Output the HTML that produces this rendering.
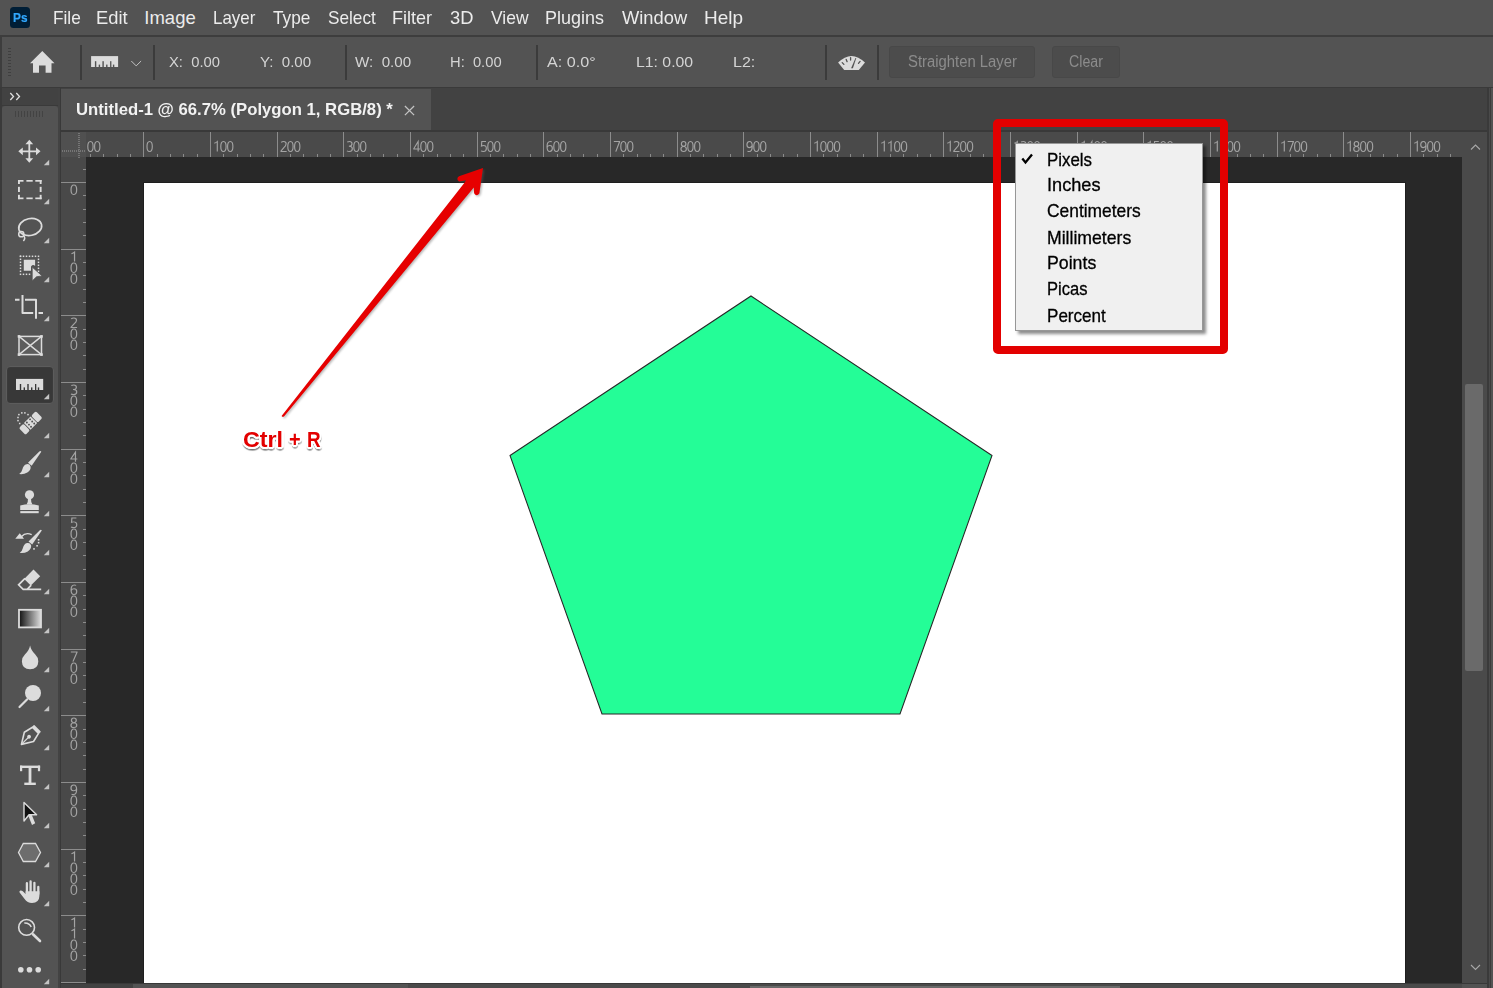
<!DOCTYPE html><html><head><meta charset="utf-8"><style>
*{margin:0;padding:0;box-sizing:border-box}
html,body{width:1493px;height:988px;overflow:hidden;background:#535353;font-family:"Liberation Sans",sans-serif}
.a{position:absolute}
.t{position:absolute;white-space:nowrap;line-height:1}
</style></head><body><div class="a" style="left:0;top:0;width:1493px;height:35px;background:#535353"></div>
<div class="a" style="left:0;top:35px;width:1493px;height:2px;background:#3d3d3d"></div>
<div class="a" style="left:9.7px;top:7.4px;width:20.8px;height:20.4px;background:#001e36;border-radius:3.5px"></div>
<div class="t" style="left:13.02px;top:11.23px;font-size:13.2px;color:#31a8ff;font-weight:bold;transform:scaleX(0.8953);transform-origin:0 0;-webkit-text-stroke:0.2px #31a8ff;">Ps</div>
<div class="t" style="left:52.59px;top:9.34px;font-size:18.5px;color:#ececec;font-weight:normal;transform:scaleX(0.9318);transform-origin:0 0;">File</div>
<div class="t" style="left:96.29px;top:9.34px;font-size:18.5px;color:#ececec;font-weight:normal;transform:scaleX(0.9924);transform-origin:0 0;">Edit</div>
<div class="t" style="left:144.30px;top:9.34px;font-size:18.5px;color:#ececec;font-weight:normal;">Image</div>
<div class="t" style="left:212.91px;top:9.34px;font-size:18.5px;color:#ececec;font-weight:normal;transform:scaleX(0.9155);transform-origin:0 0;">Layer</div>
<div class="t" style="left:273.42px;top:9.34px;font-size:18.5px;color:#ececec;font-weight:normal;transform:scaleX(0.9309);transform-origin:0 0;">Type</div>
<div class="t" style="left:328.23px;top:9.34px;font-size:18.5px;color:#ececec;font-weight:normal;transform:scaleX(0.9296);transform-origin:0 0;">Select</div>
<div class="t" style="left:392.42px;top:9.34px;font-size:18.5px;color:#ececec;font-weight:normal;transform:scaleX(0.9747);transform-origin:0 0;">Filter</div>
<div class="t" style="left:449.80px;top:9.34px;font-size:18.5px;color:#ececec;font-weight:normal;transform:scaleX(0.9923);transform-origin:0 0;">3D</div>
<div class="t" style="left:491.13px;top:9.34px;font-size:18.5px;color:#ececec;font-weight:normal;transform:scaleX(0.9437);transform-origin:0 0;">View</div>
<div class="t" style="left:545.43px;top:9.34px;font-size:18.5px;color:#ececec;font-weight:normal;transform:scaleX(0.9710);transform-origin:0 0;">Plugins</div>
<div class="t" style="left:621.63px;top:9.34px;font-size:18.5px;color:#ececec;font-weight:normal;transform:scaleX(0.9899);transform-origin:0 0;">Window</div>
<div class="t" style="left:703.94px;top:9.34px;font-size:18.5px;color:#ececec;font-weight:normal;transform:scaleX(1.0257);transform-origin:0 0;">Help</div>
<div class="a" style="left:0;top:37px;width:1493px;height:50px;background:#535353"></div>
<div class="a" style="left:0;top:37px;width:2px;height:50px;background:#3d3d3d"></div>
<div class="a" style="left:0;top:86.5px;width:1493px;height:1.5px;background:#3a3a3a"></div>
<div class="a" style="left:8px;top:48px;width:3px;height:1px;background:#3f3f3f"></div>
<div class="a" style="left:8px;top:51px;width:3px;height:1px;background:#3f3f3f"></div>
<div class="a" style="left:8px;top:54px;width:3px;height:1px;background:#3f3f3f"></div>
<div class="a" style="left:8px;top:57px;width:3px;height:1px;background:#3f3f3f"></div>
<div class="a" style="left:8px;top:60px;width:3px;height:1px;background:#3f3f3f"></div>
<div class="a" style="left:8px;top:63px;width:3px;height:1px;background:#3f3f3f"></div>
<div class="a" style="left:8px;top:66px;width:3px;height:1px;background:#3f3f3f"></div>
<div class="a" style="left:8px;top:69px;width:3px;height:1px;background:#3f3f3f"></div>
<div class="a" style="left:8px;top:72px;width:3px;height:1px;background:#3f3f3f"></div>
<div class="a" style="left:8px;top:75px;width:3px;height:1px;background:#3f3f3f"></div>
<svg class="a" style="left:0;top:37px" width="80" height="50"><path d="M42.3 14 L54.5 26.3 L51.5 26.3 L51.5 35.8 L45.6 35.8 L45.6 28.5 L39 28.5 L39 35.8 L33 35.8 L33 26.3 L30 26.3 Z" fill="#dcdcdc"/></svg>
<div class="a" style="left:80px;top:45px;width:2px;height:35px;background:#3b3b3b"></div>
<div class="a" style="left:153px;top:45px;width:2px;height:35px;background:#3b3b3b"></div>
<div class="a" style="left:344.5px;top:45px;width:2px;height:35px;background:#3b3b3b"></div>
<div class="a" style="left:536px;top:45px;width:2px;height:35px;background:#3b3b3b"></div>
<div class="a" style="left:824.5px;top:45px;width:2px;height:35px;background:#3b3b3b"></div>
<div class="a" style="left:876.5px;top:45px;width:2px;height:35px;background:#3b3b3b"></div>
<svg class="a" style="left:0;top:0" width="160" height="88"><rect x="91.1" y="56.1" width="27" height="10.9" fill="#dcdcdc"/><rect x="94.89999999999999" y="61.2" width="1.4" height="5.9" fill="#535353"/><rect x="98.69999999999999" y="64.6" width="1.4" height="2.5" fill="#535353"/><rect x="102.39999999999999" y="61.2" width="1.4" height="5.9" fill="#535353"/><rect x="106.1" y="64.6" width="1.4" height="2.5" fill="#535353"/><rect x="110.1" y="61.2" width="1.3" height="5.9" fill="#535353"/><rect x="112.89999999999999" y="64.6" width="1.4" height="2.5" fill="#535353"/><path d="M131.3 61 L136.2 65.9 L141.1 61" stroke="#cfcfcf" stroke-width="0.9" fill="none"/></svg>
<div class="t" style="left:169.47px;top:54.28px;font-size:15.5px;color:#d4d4d4;font-weight:normal;transform:scaleX(0.9543);transform-origin:0 0;">X:  0.00</div>
<div class="t" style="left:259.77px;top:54.28px;font-size:15.5px;color:#d4d4d4;font-weight:normal;transform:scaleX(0.9723);transform-origin:0 0;">Y:  0.00</div>
<div class="t" style="left:354.84px;top:54.28px;font-size:15.5px;color:#d4d4d4;font-weight:normal;transform:scaleX(0.9775);transform-origin:0 0;">W:  0.00</div>
<div class="t" style="left:450.19px;top:54.28px;font-size:15.5px;color:#d4d4d4;font-weight:normal;transform:scaleX(0.9500);transform-origin:0 0;">H:  0.00</div>
<div class="t" style="left:547.07px;top:54.28px;font-size:15.5px;color:#d4d4d4;font-weight:normal;transform:scaleX(1.0407);transform-origin:0 0;">A: 0.0°</div>
<div class="t" style="left:636.20px;top:54.28px;font-size:15.5px;color:#d4d4d4;font-weight:normal;transform:scaleX(1.0193);transform-origin:0 0;">L1: 0.00</div>
<div class="t" style="left:733.19px;top:54.28px;font-size:15.5px;color:#d4d4d4;font-weight:normal;transform:scaleX(1.0337);transform-origin:0 0;">L2:</div>
<svg class="a" style="left:820px;top:40px" width="60" height="40"><g transform="translate(-820 -40)"><path d="M838.1 62.6 Q851.5 49.2 865 62.6 L858.8 69.9 H844.2 Z" fill="#dcdcdc"/><path d="M842.2 62.6 L843.9 64.4 M846.2 59.4 L847.1 61.7 M850.6 57.6 V60.1 M860.1 61.4 L858.5 63.3" stroke="#535353" stroke-width="1.3" stroke-linecap="round"/><path d="M851.1 68.2 L852.9 68.2 L856.3 58 L855.5 57.9 Z" fill="#535353"/></g></svg>
<div class="a" style="left:889px;top:46px;width:146px;height:32px;background:#4c4c4c;border:1px solid #484848;border-radius:3px"></div>
<div class="t" style="left:907.63px;top:54.33px;font-size:15.8px;color:#8c8c8c;font-weight:normal;transform:scaleX(0.9393);transform-origin:0 0;">Straighten Layer</div>
<div class="a" style="left:1052px;top:46px;width:68px;height:32px;background:#4c4c4c;border:1px solid #484848;border-radius:3px"></div>
<div class="t" style="left:1069.29px;top:54.33px;font-size:15.8px;color:#8c8c8c;font-weight:normal;transform:scaleX(0.8987);transform-origin:0 0;">Clear</div>
<div class="a" style="left:0;top:88px;width:61px;height:900px;background:#434343"></div>
<div class="a" style="left:0;top:88px;width:2px;height:900px;background:#3a3a3a"></div>
<div class="a" style="left:2px;top:88px;width:55.5px;height:17px;background:#424242"></div>
<svg class="a" style="left:0;top:88px" width="40" height="18"><path d="M10.3 5 L13.5 8.5 L10.3 12 M16.3 5 L19.5 8.5 L16.3 12" stroke="#e0e0e0" stroke-width="1.3" fill="none"/></svg>
<div class="a" style="left:2px;top:104.8px;width:55.5px;height:1.2px;background:#3a3a3a"></div>
<div class="a" style="left:2px;top:106px;width:55.5px;height:882px;background:#535353;border-radius:3px 3px 0 0"></div>
<div class="a" style="left:57.5px;top:88px;width:3.5px;height:900px;background:#434343"></div>
<div class="a" style="left:60px;top:88px;width:1px;height:900px;background:#393939"></div>
<div class="a" style="left:15px;top:111px;width:1px;height:5.5px;background:#434343"></div>
<div class="a" style="left:18px;top:111px;width:1px;height:5.5px;background:#434343"></div>
<div class="a" style="left:21px;top:111px;width:1px;height:5.5px;background:#434343"></div>
<div class="a" style="left:24px;top:111px;width:1px;height:5.5px;background:#434343"></div>
<div class="a" style="left:27px;top:111px;width:1px;height:5.5px;background:#434343"></div>
<div class="a" style="left:30px;top:111px;width:1px;height:5.5px;background:#434343"></div>
<div class="a" style="left:33px;top:111px;width:1px;height:5.5px;background:#434343"></div>
<div class="a" style="left:36px;top:111px;width:1px;height:5.5px;background:#434343"></div>
<div class="a" style="left:39px;top:111px;width:1px;height:5.5px;background:#434343"></div>
<div class="a" style="left:42px;top:111px;width:1px;height:5.5px;background:#434343"></div>
<div class="a" style="left:6px;top:365.8px;width:48px;height:37.8px;background:#383838;border:1px solid #5c5c5c;border-radius:4px;box-shadow:inset 0 0 0 0.6px #3e3e3e"></div>
<svg class="a" style="left:0;top:0" width="61" height="988"><path d="M29.3 141.8 V160.8 M20.5 151.3 H38.5" stroke="#dcdcdc" stroke-width="1.8"/><path d="M29.3 139.8 L33.2 144.3 L25.4 144.3 Z M29.3 162.8 L33.2 158.3 L25.4 158.3 Z M18.3 151.3 L22.8 147.4 L22.8 155.20000000000002 Z M40.5 151.3 L36 147.4 L36 155.20000000000002 Z" fill="#dcdcdc"/><rect x="18" y="180" width="5.5" height="1.7" fill="#dcdcdc"/><rect x="18" y="180" width="1.9" height="4" fill="#dcdcdc"/><rect x="26.4" y="180" width="6.3" height="1.7" fill="#dcdcdc"/><rect x="35.3" y="180" width="6.3" height="1.7" fill="#dcdcdc"/><rect x="39.7" y="180" width="1.9" height="4" fill="#dcdcdc"/><rect x="18" y="186.8" width="1.9" height="5.2" fill="#dcdcdc"/><rect x="39.7" y="186.8" width="1.9" height="5.2" fill="#dcdcdc"/><rect x="18" y="194.8" width="1.9" height="4.4" fill="#dcdcdc"/><rect x="18" y="197.5" width="5.5" height="1.7" fill="#dcdcdc"/><rect x="26.4" y="197.5" width="6.3" height="1.7" fill="#dcdcdc"/><rect x="39.7" y="194.8" width="1.9" height="4.4" fill="#dcdcdc"/><rect x="35.3" y="197.5" width="6.3" height="1.7" fill="#dcdcdc"/><ellipse cx="30.2" cy="227" rx="11.6" ry="8.4" transform="rotate(-12 30.2 227)" fill="none" stroke="#dcdcdc" stroke-width="1.7"/><circle cx="21.3" cy="234.2" r="2.6" fill="none" stroke="#dcdcdc" stroke-width="1.5"/><path d="M23.5 235.5 Q26 238 23.4 241" fill="none" stroke="#dcdcdc" stroke-width="1.5"/><rect x="19.75" y="255.55" width="1.5" height="1.5" fill="#dcdcdc"/><rect x="19.75" y="255.55" width="1.5" height="1.5" fill="#dcdcdc"/><rect x="22.75" y="255.55" width="1.5" height="1.5" fill="#dcdcdc"/><rect x="19.75" y="258.55" width="1.5" height="1.5" fill="#dcdcdc"/><rect x="25.75" y="255.55" width="1.5" height="1.5" fill="#dcdcdc"/><rect x="19.75" y="261.55" width="1.5" height="1.5" fill="#dcdcdc"/><rect x="28.75" y="255.55" width="1.5" height="1.5" fill="#dcdcdc"/><rect x="19.75" y="264.55" width="1.5" height="1.5" fill="#dcdcdc"/><rect x="31.75" y="255.55" width="1.5" height="1.5" fill="#dcdcdc"/><rect x="19.75" y="267.55" width="1.5" height="1.5" fill="#dcdcdc"/><rect x="34.75" y="255.55" width="1.5" height="1.5" fill="#dcdcdc"/><rect x="19.75" y="270.55" width="1.5" height="1.5" fill="#dcdcdc"/><rect x="37.75" y="255.55" width="1.5" height="1.5" fill="#dcdcdc"/><rect x="19.75" y="273.55" width="1.5" height="1.5" fill="#dcdcdc"/><rect x="37.75" y="258.55" width="1.5" height="1.5" fill="#dcdcdc"/><rect x="37.75" y="261.55" width="1.5" height="1.5" fill="#dcdcdc"/><rect x="37.75" y="264.55" width="1.5" height="1.5" fill="#dcdcdc"/><rect x="37.75" y="267.55" width="1.5" height="1.5" fill="#dcdcdc"/><rect x="37.75" y="270.55" width="1.5" height="1.5" fill="#dcdcdc"/><rect x="22.75" y="273.55" width="1.5" height="1.5" fill="#dcdcdc"/><rect x="25.75" y="273.55" width="1.5" height="1.5" fill="#dcdcdc"/><rect x="28.75" y="273.55" width="1.5" height="1.5" fill="#dcdcdc"/><path d="M23.8 259.8 H35.1 V266 Q33 264 31 266.5 V270.8 H23.8 Z" fill="#dcdcdc"/><path d="M32.2 267.1 L42.1 275.9 L36.5 276.8 L32.2 281 Z" fill="#dcdcdc" stroke="#535353" stroke-width="0.8" stroke-linejoin="round"/><path d="M15 299.8 H19.5 M22.5 295 V313 H33.2 M25 299.8 H36 V318.8 M38.5 313 H43" fill="none" stroke="#dcdcdc" stroke-width="2" stroke-linejoin="round"/><rect x="19" y="336.4" width="22.5" height="18.2" fill="#5d5d5d" stroke="#dcdcdc" stroke-width="1.5"/><path d="M19 336.4 L41.5 354.6 M41.5 336.4 L19 354.6" stroke="#dcdcdc" stroke-width="1.4"/><rect x="17.7" y="335.09999999999997" width="2.6" height="2.6" fill="#dcdcdc"/><rect x="17.7" y="353.3" width="2.6" height="2.6" fill="#dcdcdc"/><rect x="40.2" y="335.09999999999997" width="2.6" height="2.6" fill="#dcdcdc"/><rect x="40.2" y="353.3" width="2.6" height="2.6" fill="#dcdcdc"/><rect x="16" y="378.9" width="27.2" height="11.1" fill="#dcdcdc"/><rect x="19.8" y="384.0" width="1.4" height="6.1" fill="#383838"/><rect x="23.6" y="387.4" width="1.4" height="2.6999999999999993" fill="#383838"/><rect x="27.3" y="384.0" width="1.4" height="6.1" fill="#383838"/><rect x="31" y="387.4" width="1.4" height="2.6999999999999993" fill="#383838"/><rect x="35" y="384.0" width="1.3" height="6.1" fill="#383838"/><rect x="37.8" y="387.4" width="1.4" height="2.6999999999999993" fill="#383838"/><g transform="translate(22.2 431.45) rotate(-45)"><rect x="0" y="-4.7" width="6.3" height="9.4" rx="1.6" fill="#dcdcdc"/><rect x="17.3" y="-4.7" width="6.6" height="9.4" rx="1.6" fill="#dcdcdc"/><rect x="7.1" y="-4.7" width="9.4" height="9.4" fill="#dcdcdc"/><circle cx="9.6" cy="-3" r="0.95" fill="#535353"/><circle cx="9.6" cy="0" r="0.95" fill="#535353"/><circle cx="9.6" cy="2.9" r="0.95" fill="#535353"/><circle cx="14.1" cy="-3" r="0.95" fill="#535353"/><circle cx="14.1" cy="0" r="0.95" fill="#535353"/><circle cx="14.1" cy="2.9" r="0.95" fill="#535353"/></g><rect x="18.15" y="413.85" width="1.5" height="1.5" fill="#dcdcdc"/><rect x="21.05" y="412.15" width="1.5" height="1.5" fill="#dcdcdc"/><rect x="24.15" y="412.15" width="1.5" height="1.5" fill="#dcdcdc"/><rect x="27.25" y="413.85" width="1.5" height="1.5" fill="#dcdcdc"/><rect x="17.25" y="416.75" width="1.5" height="1.5" fill="#dcdcdc"/><rect x="17.25" y="419.85" width="1.5" height="1.5" fill="#dcdcdc"/><rect x="18.95" y="422.75" width="1.5" height="1.5" fill="#dcdcdc"/><path d="M28 462.7 L39.3 451.4 Q40.6 450.3 41.3 451.8 L31.7 465.8 Z" fill="#dcdcdc"/><path d="M19.2 474 Q21.8 472.3 22.4 469.3 Q23.3 465 26.6 464.2 Q29.6 463.6 30.6 466.4 Q31.2 470 27.3 472.6 Q23.6 474.6 19.2 474 Z" fill="#dcdcdc"/><circle cx="29.5" cy="494.8" r="4.6" fill="#dcdcdc"/><path d="M28 498 Q28.2 502.5 26.5 504.6 H32.5 Q30.8 502.5 31 498 Z" fill="#dcdcdc"/><path d="M20.2 505.5 Q29.5 503 38.8 505.5 V510 H20.2 Z" fill="#dcdcdc"/><rect x="20.3" y="511.1" width="18.4" height="2.1" fill="#dcdcdc"/><g transform="translate(0.5 78.8)"><path d="M28 462.7 L39.3 451.4 Q40.6 450.3 41.3 451.8 L31.7 465.8 Z" fill="#dcdcdc"/><path d="M19.2 474 Q21.8 472.3 22.4 469.3 Q23.3 465 26.6 464.2 Q29.6 463.6 30.6 466.4 Q31.2 470 27.3 472.6 Q23.6 474.6 19.2 474 Z" fill="#dcdcdc"/></g><path d="M15.3 538.8 L19.7 533.2 L24 538.8 Z" fill="#dcdcdc"/><path d="M21.5 536.5 Q25.5 532 31.7 534.6" fill="none" stroke="#dcdcdc" stroke-width="1.4"/><rect x="37.800000000000004" y="539.0" width="1.6" height="1.6" fill="#dcdcdc"/><rect x="37.800000000000004" y="541.9000000000001" width="1.6" height="1.6" fill="#dcdcdc"/><rect x="36.300000000000004" y="545.0" width="1.6" height="1.6" fill="#dcdcdc"/><rect x="33.2" y="548.1" width="1.6" height="1.6" fill="#dcdcdc"/><path d="M33.5 569.6 L40.2 576.3 L30.8 585.6 L24.2 579 Z" fill="#dcdcdc"/><path d="M25 578.3 L18.6 584.8 L23.2 589.3 H41.2 M31.2 585.2 L27.2 589.3" fill="none" stroke="#dcdcdc" stroke-width="1.7"/><defs><linearGradient id="gr" x1="0" x2="1"><stop offset="0" stop-color="#111"/><stop offset="1" stop-color="#ddd"/></linearGradient></defs><rect x="19" y="609.8" width="22" height="17.6" fill="url(#gr)" stroke="#dcdcdc" stroke-width="1.8"/><path d="M30.1 645.6 Q31 650.5 35.3 654.6 Q38.4 657.6 38.3 661.5 Q38 669.3 30.1 669.3 Q22.2 669.3 21.9 661.5 Q21.8 657.6 24.9 654.6 Q29.2 650.5 30.1 645.6 Z" fill="#dcdcdc"/><circle cx="33" cy="693" r="8" fill="#dcdcdc"/><path d="M19.5 707 L27 699.5" stroke="#dcdcdc" stroke-width="2.2" stroke-linecap="round"/><g transform="translate(20.8 745) rotate(-45)"><path d="M0.9 0 L11.5 -6.5 L20.8 -4.3 V4.3 L11.5 6.5 Z" fill="none" stroke="#dcdcdc" stroke-width="1.6" stroke-linejoin="round"/><rect x="20.3" y="-4.9" width="3.4" height="9.8" rx="0.7" fill="#dcdcdc"/><circle cx="11.7" cy="0" r="1.9" fill="#dcdcdc"/><path d="M1.5 0 H11" stroke="#dcdcdc" stroke-width="1.2"/></g><rect x="20" y="765.6" width="20.1" height="2.4" fill="#dcdcdc"/><rect x="20" y="765.6" width="2.2" height="5.6" fill="#dcdcdc"/><rect x="37.9" y="765.6" width="2.2" height="5.6" fill="#dcdcdc"/><rect x="28.6" y="766" width="2.8" height="18" fill="#dcdcdc"/><rect x="24.3" y="782.6" width="11.5" height="2.4" fill="#dcdcdc"/><path d="M28.2 815.6 L31.6 814.6 L35.2 823.3 L32 824.9 Z" fill="#dcdcdc"/><path d="M24 802.4 L36.6 814.7 L29 814.7 L24 821 Z" fill="#111" stroke="#dcdcdc" stroke-width="1.4" stroke-linejoin="round"/><path d="M23.3 843.5 H35.5 L40.5 852.5 L35.5 861.5 H23.3 L18.5 852.5 Z" fill="#6d6d6d" stroke="#dcdcdc" stroke-width="1.3"/><path d="M26.9 883.2 V893 M30.6 881.4 V893 M34.4 882.8 V893 M38.3 887 V894" stroke="#dcdcdc" stroke-width="2.3" stroke-linecap="round"/><path d="M25.6 891.2 H39.4 V896 Q39.2 902.9 32 902.9 Q27.3 902.9 24.6 899 L19.6 892.6 Q18.9 891 20.4 890.5 Q21.6 890.2 22.8 891.3 L25.6 894 Z" fill="#dcdcdc"/><circle cx="26.6" cy="927.4" r="7.9" fill="none" stroke="#dcdcdc" stroke-width="1.6"/><path d="M33 934.3 L40 941" stroke="#dcdcdc" stroke-width="2.6" stroke-linecap="round"/><path d="M24.3 922.9 Q29.5 922.6 31.2 927" stroke="#dcdcdc" stroke-width="1.5" fill="none"/><circle cx="20.8" cy="969.7" r="2.8" fill="#dcdcdc"/><circle cx="29.5" cy="969.7" r="2.8" fill="#dcdcdc"/><circle cx="38.2" cy="969.7" r="2.8" fill="#dcdcdc"/><path d="M49.2 159.8 L49.2 165.2 L43.8 165.2 Z" fill="#c4c4c4"/><path d="M49.2 198.8 L49.2 204.2 L43.8 204.2 Z" fill="#c4c4c4"/><path d="M49.2 237.8 L49.2 243.2 L43.8 243.2 Z" fill="#c4c4c4"/><path d="M49.2 276.8 L49.2 282.2 L43.8 282.2 Z" fill="#c4c4c4"/><path d="M49.2 315.8 L49.2 321.2 L43.8 321.2 Z" fill="#c4c4c4"/><path d="M49.2 393.8 L49.2 399.2 L43.8 399.2 Z" fill="#c4c4c4"/><path d="M49.2 432.8 L49.2 438.2 L43.8 438.2 Z" fill="#c4c4c4"/><path d="M49.2 471.8 L49.2 477.2 L43.8 477.2 Z" fill="#c4c4c4"/><path d="M49.2 510.8 L49.2 516.2 L43.8 516.2 Z" fill="#c4c4c4"/><path d="M49.2 549.8 L49.2 555.2 L43.8 555.2 Z" fill="#c4c4c4"/><path d="M49.2 588.8 L49.2 594.2 L43.8 594.2 Z" fill="#c4c4c4"/><path d="M49.2 627.8 L49.2 633.2 L43.8 633.2 Z" fill="#c4c4c4"/><path d="M49.2 666.8 L49.2 672.2 L43.8 672.2 Z" fill="#c4c4c4"/><path d="M49.2 705.8 L49.2 711.2 L43.8 711.2 Z" fill="#c4c4c4"/><path d="M49.2 744.8 L49.2 750.2 L43.8 750.2 Z" fill="#c4c4c4"/><path d="M49.2 783.8 L49.2 789.2 L43.8 789.2 Z" fill="#c4c4c4"/><path d="M49.2 822.8 L49.2 828.2 L43.8 828.2 Z" fill="#c4c4c4"/><path d="M49.2 861.8 L49.2 867.2 L43.8 867.2 Z" fill="#c4c4c4"/><path d="M49.2 900.8 L49.2 906.2 L43.8 906.2 Z" fill="#c4c4c4"/><path d="M49.2 978.8 L49.2 984.2 L43.8 984.2 Z" fill="#c4c4c4"/></svg>
<div class="a" style="left:61px;top:88px;width:1426px;height:42px;background:#424242"></div>
<div class="a" style="left:61px;top:88.5px;width:370px;height:41.5px;background:#535353"></div>
<div class="t" style="left:76.40px;top:102.29px;font-size:16.9px;color:#f2f2f2;font-weight:bold;transform:scaleX(0.9884);transform-origin:0 0;">Untitled-1 @ 66.7% (Polygon 1, RGB/8) *</div>
<svg class="a" style="left:400px;top:100px" width="20" height="20"><path d="M4.9 6 L14.1 15.1 M14.1 6 L4.9 15.1" stroke="#c4c4c4" stroke-width="1.25"/></svg>
<div class="a" style="left:61px;top:130px;width:1426px;height:2px;background:#393939"></div>
<div class="a" style="left:1487px;top:88px;width:1.5px;height:900px;background:#3a3a3a"></div>
<div class="a" style="left:1488.5px;top:88px;width:1.5px;height:900px;background:#4a4a4a"></div>
<div class="a" style="left:1490px;top:88px;width:1px;height:900px;background:#3c3c3c"></div>
<div class="a" style="left:1491px;top:88px;width:2px;height:900px;background:#535353"></div>
<div class="a" style="left:61px;top:132px;width:1401px;height:25px;background:#4a4a4a"></div>
<div class="a" style="left:61px;top:157px;width:25px;height:826px;background:#494949"></div>
<div class="a" style="left:61px;top:132px;width:25px;height:25px;background:#505050"></div>
<svg class="a" style="left:0;top:0" width="1493" height="988" shape-rendering="crispEdges"><path d="M78 133 h2 M78 135 h2 M78 137 h2 M78 139 h2 M78 141 h2 M78 143 h2 M78 145 h2 M78 147 h2 M78 149 h2 M78 151 h2 M78 153 h2 M78 155 h2 M78 157 h2" stroke="#767676" stroke-width="1"/><path d="M62 150.5 h1 M64 150.5 h1 M66 150.5 h1 M68 150.5 h1 M70 150.5 h1 M72 150.5 h1 M74 150.5 h1 M76 150.5 h1 M78 150.5 h1 M80 150.5 h1 M82 150.5 h1 M84 150.5 h1" stroke="#767676" stroke-width="2"/><path d="M90.5 154 V157 M103.5 154 V157 M117.5 154 V157 M130.5 154 V157 M143.5 132 V157 M157.5 154 V157 M170.5 154 V157 M183.5 154 V157 M197.5 154 V157 M210.5 132 V157 M223.5 154 V157 M237.5 154 V157 M250.5 154 V157 M263.5 154 V157 M277.5 132 V157 M290.5 154 V157 M303.5 154 V157 M317.5 154 V157 M330.5 154 V157 M343.5 132 V157 M357.5 154 V157 M370.5 154 V157 M383.5 154 V157 M397.5 154 V157 M410.5 132 V157 M423.5 154 V157 M437.5 154 V157 M450.5 154 V157 M463.5 154 V157 M477.5 132 V157 M490.5 154 V157 M503.5 154 V157 M517.5 154 V157 M530.5 154 V157 M543.5 132 V157 M557.5 154 V157 M570.5 154 V157 M583.5 154 V157 M597.5 154 V157 M610.5 132 V157 M623.5 154 V157 M637.5 154 V157 M650.5 154 V157 M663.5 154 V157 M677.5 132 V157 M690.5 154 V157 M703.5 154 V157 M717.5 154 V157 M730.5 154 V157 M743.5 132 V157 M757.5 154 V157 M770.5 154 V157 M783.5 154 V157 M797.5 154 V157 M810.5 132 V157 M823.5 154 V157 M837.5 154 V157 M850.5 154 V157 M863.5 154 V157 M877.5 132 V157 M890.5 154 V157 M903.5 154 V157 M917.5 154 V157 M930.5 154 V157 M943.5 132 V157 M957.5 154 V157 M970.5 154 V157 M983.5 154 V157 M997.5 154 V157 M1010.5 132 V157 M1023.5 154 V157 M1037.5 154 V157 M1050.5 154 V157 M1063.5 154 V157 M1077.5 132 V157 M1090.5 154 V157 M1103.5 154 V157 M1117.5 154 V157 M1130.5 154 V157 M1143.5 132 V157 M1157.5 154 V157 M1170.5 154 V157 M1183.5 154 V157 M1197.5 154 V157 M1210.5 132 V157 M1223.5 154 V157 M1237.5 154 V157 M1250.5 154 V157 M1263.5 154 V157 M1277.5 132 V157 M1290.5 154 V157 M1303.5 154 V157 M1317.5 154 V157 M1330.5 154 V157 M1343.5 132 V157 M1357.5 154 V157 M1370.5 154 V157 M1383.5 154 V157 M1397.5 154 V157 M1410.5 132 V157 M1423.5 154 V157 M1437.5 154 V157 M1450.5 154 V157" stroke="#8c8c8c" stroke-width="1"/><path d="M83 169.5 H86 M61 182.5 H86 M83 195.5 H86 M83 209.5 H86 M83 222.5 H86 M83 235.5 H86 M61 249.5 H86 M83 262.5 H86 M83 275.5 H86 M83 289.5 H86 M83 302.5 H86 M61 315.5 H86 M83 329.5 H86 M83 342.5 H86 M83 355.5 H86 M83 369.5 H86 M61 382.5 H86 M83 395.5 H86 M83 409.5 H86 M83 422.5 H86 M83 435.5 H86 M61 449.5 H86 M83 462.5 H86 M83 475.5 H86 M83 489.5 H86 M83 502.5 H86 M61 515.5 H86 M83 529.5 H86 M83 542.5 H86 M83 555.5 H86 M83 569.5 H86 M61 582.5 H86 M83 595.5 H86 M83 609.5 H86 M83 622.5 H86 M83 635.5 H86 M61 649.5 H86 M83 662.5 H86 M83 675.5 H86 M83 689.5 H86 M83 702.5 H86 M61 715.5 H86 M83 729.5 H86 M83 742.5 H86 M83 755.5 H86 M83 769.5 H86 M61 782.5 H86 M83 795.5 H86 M83 809.5 H86 M83 822.5 H86 M83 835.5 H86 M61 849.5 H86 M83 862.5 H86 M83 875.5 H86 M83 889.5 H86 M83 902.5 H86 M61 915.5 H86 M83 929.5 H86 M83 942.5 H86 M83 955.5 H86 M83 969.5 H86 M61 982.5 H86" stroke="#8c8c8c" stroke-width="1"/></svg>
<svg class="a" style="left:86px;top:132px" width="1376" height="25"><g transform="translate(-86 -132)" fill="none" stroke="#a4a4a4" stroke-width="1.05"><path transform="translate(80.40 141.00) scale(1.08 1.0)" d="M0.9 2.3 Q2.6 1.5 3.6 0.5 V10.5"/><path transform="translate(87.20 141.00) scale(1.08 1.0)" d="M3 0.55 Q0.55 0.55 0.55 5.5 Q0.55 10.45 3 10.45 Q5.45 10.45 5.45 5.5 Q5.45 0.55 3 0.55 Z"/><path transform="translate(94.00 141.00) scale(1.08 1.0)" d="M3 0.55 Q0.55 0.55 0.55 5.5 Q0.55 10.45 3 10.45 Q5.45 10.45 5.45 5.5 Q5.45 0.55 3 0.55 Z"/><path transform="translate(146.40 141.00) scale(1.08 1.0)" d="M3 0.55 Q0.55 0.55 0.55 5.5 Q0.55 10.45 3 10.45 Q5.45 10.45 5.45 5.5 Q5.45 0.55 3 0.55 Z"/><path transform="translate(213.40 141.00) scale(1.08 1.0)" d="M0.9 2.3 Q2.6 1.5 3.6 0.5 V10.5"/><path transform="translate(220.20 141.00) scale(1.08 1.0)" d="M3 0.55 Q0.55 0.55 0.55 5.5 Q0.55 10.45 3 10.45 Q5.45 10.45 5.45 5.5 Q5.45 0.55 3 0.55 Z"/><path transform="translate(227.00 141.00) scale(1.08 1.0)" d="M3 0.55 Q0.55 0.55 0.55 5.5 Q0.55 10.45 3 10.45 Q5.45 10.45 5.45 5.5 Q5.45 0.55 3 0.55 Z"/><path transform="translate(280.40 141.00) scale(1.08 1.0)" d="M0.7 1.4 Q1.6 0.5 3 0.5 Q5.3 0.5 5.3 2.8 Q5.3 4.6 3.2 6.6 L0.6 10 V10.45 H5.8"/><path transform="translate(287.20 141.00) scale(1.08 1.0)" d="M3 0.55 Q0.55 0.55 0.55 5.5 Q0.55 10.45 3 10.45 Q5.45 10.45 5.45 5.5 Q5.45 0.55 3 0.55 Z"/><path transform="translate(294.00 141.00) scale(1.08 1.0)" d="M3 0.55 Q0.55 0.55 0.55 5.5 Q0.55 10.45 3 10.45 Q5.45 10.45 5.45 5.5 Q5.45 0.55 3 0.55 Z"/><path transform="translate(346.40 141.00) scale(1.08 1.0)" d="M0.8 1 Q1.8 0.5 2.9 0.5 Q5.2 0.5 5.2 2.7 Q5.2 5.2 2.3 5.2 H2.6 Q5.5 5.2 5.5 7.7 Q5.5 10.5 2.7 10.5 Q1.4 10.5 0.5 9.9"/><path transform="translate(353.20 141.00) scale(1.08 1.0)" d="M3 0.55 Q0.55 0.55 0.55 5.5 Q0.55 10.45 3 10.45 Q5.45 10.45 5.45 5.5 Q5.45 0.55 3 0.55 Z"/><path transform="translate(360.00 141.00) scale(1.08 1.0)" d="M3 0.55 Q0.55 0.55 0.55 5.5 Q0.55 10.45 3 10.45 Q5.45 10.45 5.45 5.5 Q5.45 0.55 3 0.55 Z"/><path transform="translate(413.40 141.00) scale(1.08 1.0)" d="M4.4 10.6 V0.6 L0.4 7.6 V7.9 H6"/><path transform="translate(420.20 141.00) scale(1.08 1.0)" d="M3 0.55 Q0.55 0.55 0.55 5.5 Q0.55 10.45 3 10.45 Q5.45 10.45 5.45 5.5 Q5.45 0.55 3 0.55 Z"/><path transform="translate(427.00 141.00) scale(1.08 1.0)" d="M3 0.55 Q0.55 0.55 0.55 5.5 Q0.55 10.45 3 10.45 Q5.45 10.45 5.45 5.5 Q5.45 0.55 3 0.55 Z"/><path transform="translate(480.40 141.00) scale(1.08 1.0)" d="M5.2 0.55 H1.3 L1 5 Q1.8 4.5 2.9 4.5 Q5.5 4.5 5.5 7.4 Q5.5 10.45 2.7 10.45 Q1.4 10.45 0.6 9.9"/><path transform="translate(487.20 141.00) scale(1.08 1.0)" d="M3 0.55 Q0.55 0.55 0.55 5.5 Q0.55 10.45 3 10.45 Q5.45 10.45 5.45 5.5 Q5.45 0.55 3 0.55 Z"/><path transform="translate(494.00 141.00) scale(1.08 1.0)" d="M3 0.55 Q0.55 0.55 0.55 5.5 Q0.55 10.45 3 10.45 Q5.45 10.45 5.45 5.5 Q5.45 0.55 3 0.55 Z"/><path transform="translate(546.40 141.00) scale(1.08 1.0)" d="M5 0.8 Q4.3 0.5 3.4 0.5 Q0.6 0.5 0.6 5.8 Q0.6 10.5 3.1 10.5 Q5.5 10.5 5.5 7.3 Q5.5 4.4 3.2 4.4 Q1.4 4.4 0.7 6.2"/><path transform="translate(553.20 141.00) scale(1.08 1.0)" d="M3 0.55 Q0.55 0.55 0.55 5.5 Q0.55 10.45 3 10.45 Q5.45 10.45 5.45 5.5 Q5.45 0.55 3 0.55 Z"/><path transform="translate(560.00 141.00) scale(1.08 1.0)" d="M3 0.55 Q0.55 0.55 0.55 5.5 Q0.55 10.45 3 10.45 Q5.45 10.45 5.45 5.5 Q5.45 0.55 3 0.55 Z"/><path transform="translate(613.40 141.00) scale(1.08 1.0)" d="M0.4 0.55 H5.7 V0.8 L2.2 10.6"/><path transform="translate(620.20 141.00) scale(1.08 1.0)" d="M3 0.55 Q0.55 0.55 0.55 5.5 Q0.55 10.45 3 10.45 Q5.45 10.45 5.45 5.5 Q5.45 0.55 3 0.55 Z"/><path transform="translate(627.00 141.00) scale(1.08 1.0)" d="M3 0.55 Q0.55 0.55 0.55 5.5 Q0.55 10.45 3 10.45 Q5.45 10.45 5.45 5.5 Q5.45 0.55 3 0.55 Z"/><path transform="translate(680.40 141.00) scale(1.08 1.0)" d="M3 5.3 Q0.9 5.1 0.9 2.9 Q0.9 0.5 3 0.5 Q5.1 0.5 5.1 2.9 Q5.1 5.1 3 5.3 Q0.5 5.5 0.5 8 Q0.5 10.5 3 10.5 Q5.5 10.5 5.5 8 Q5.5 5.5 3 5.3 Z"/><path transform="translate(687.20 141.00) scale(1.08 1.0)" d="M3 0.55 Q0.55 0.55 0.55 5.5 Q0.55 10.45 3 10.45 Q5.45 10.45 5.45 5.5 Q5.45 0.55 3 0.55 Z"/><path transform="translate(694.00 141.00) scale(1.08 1.0)" d="M3 0.55 Q0.55 0.55 0.55 5.5 Q0.55 10.45 3 10.45 Q5.45 10.45 5.45 5.5 Q5.45 0.55 3 0.55 Z"/><path transform="translate(746.40 141.00) scale(1.08 1.0)" d="M1 10.2 Q1.7 10.5 2.6 10.5 Q5.4 10.5 5.4 5.2 Q5.4 0.5 2.9 0.5 Q0.5 0.5 0.5 3.7 Q0.5 6.6 2.8 6.6 Q4.6 6.6 5.3 4.8"/><path transform="translate(753.20 141.00) scale(1.08 1.0)" d="M3 0.55 Q0.55 0.55 0.55 5.5 Q0.55 10.45 3 10.45 Q5.45 10.45 5.45 5.5 Q5.45 0.55 3 0.55 Z"/><path transform="translate(760.00 141.00) scale(1.08 1.0)" d="M3 0.55 Q0.55 0.55 0.55 5.5 Q0.55 10.45 3 10.45 Q5.45 10.45 5.45 5.5 Q5.45 0.55 3 0.55 Z"/><path transform="translate(813.40 141.00) scale(1.08 1.0)" d="M0.9 2.3 Q2.6 1.5 3.6 0.5 V10.5"/><path transform="translate(820.20 141.00) scale(1.08 1.0)" d="M3 0.55 Q0.55 0.55 0.55 5.5 Q0.55 10.45 3 10.45 Q5.45 10.45 5.45 5.5 Q5.45 0.55 3 0.55 Z"/><path transform="translate(827.00 141.00) scale(1.08 1.0)" d="M3 0.55 Q0.55 0.55 0.55 5.5 Q0.55 10.45 3 10.45 Q5.45 10.45 5.45 5.5 Q5.45 0.55 3 0.55 Z"/><path transform="translate(833.80 141.00) scale(1.08 1.0)" d="M3 0.55 Q0.55 0.55 0.55 5.5 Q0.55 10.45 3 10.45 Q5.45 10.45 5.45 5.5 Q5.45 0.55 3 0.55 Z"/><path transform="translate(880.40 141.00) scale(1.08 1.0)" d="M0.9 2.3 Q2.6 1.5 3.6 0.5 V10.5"/><path transform="translate(887.20 141.00) scale(1.08 1.0)" d="M0.9 2.3 Q2.6 1.5 3.6 0.5 V10.5"/><path transform="translate(894.00 141.00) scale(1.08 1.0)" d="M3 0.55 Q0.55 0.55 0.55 5.5 Q0.55 10.45 3 10.45 Q5.45 10.45 5.45 5.5 Q5.45 0.55 3 0.55 Z"/><path transform="translate(900.80 141.00) scale(1.08 1.0)" d="M3 0.55 Q0.55 0.55 0.55 5.5 Q0.55 10.45 3 10.45 Q5.45 10.45 5.45 5.5 Q5.45 0.55 3 0.55 Z"/><path transform="translate(946.40 141.00) scale(1.08 1.0)" d="M0.9 2.3 Q2.6 1.5 3.6 0.5 V10.5"/><path transform="translate(953.20 141.00) scale(1.08 1.0)" d="M0.7 1.4 Q1.6 0.5 3 0.5 Q5.3 0.5 5.3 2.8 Q5.3 4.6 3.2 6.6 L0.6 10 V10.45 H5.8"/><path transform="translate(960.00 141.00) scale(1.08 1.0)" d="M3 0.55 Q0.55 0.55 0.55 5.5 Q0.55 10.45 3 10.45 Q5.45 10.45 5.45 5.5 Q5.45 0.55 3 0.55 Z"/><path transform="translate(966.80 141.00) scale(1.08 1.0)" d="M3 0.55 Q0.55 0.55 0.55 5.5 Q0.55 10.45 3 10.45 Q5.45 10.45 5.45 5.5 Q5.45 0.55 3 0.55 Z"/><path transform="translate(1013.40 141.00) scale(1.08 1.0)" d="M0.9 2.3 Q2.6 1.5 3.6 0.5 V10.5"/><path transform="translate(1020.20 141.00) scale(1.08 1.0)" d="M0.8 1 Q1.8 0.5 2.9 0.5 Q5.2 0.5 5.2 2.7 Q5.2 5.2 2.3 5.2 H2.6 Q5.5 5.2 5.5 7.7 Q5.5 10.5 2.7 10.5 Q1.4 10.5 0.5 9.9"/><path transform="translate(1027.00 141.00) scale(1.08 1.0)" d="M3 0.55 Q0.55 0.55 0.55 5.5 Q0.55 10.45 3 10.45 Q5.45 10.45 5.45 5.5 Q5.45 0.55 3 0.55 Z"/><path transform="translate(1033.80 141.00) scale(1.08 1.0)" d="M3 0.55 Q0.55 0.55 0.55 5.5 Q0.55 10.45 3 10.45 Q5.45 10.45 5.45 5.5 Q5.45 0.55 3 0.55 Z"/><path transform="translate(1080.40 141.00) scale(1.08 1.0)" d="M0.9 2.3 Q2.6 1.5 3.6 0.5 V10.5"/><path transform="translate(1087.20 141.00) scale(1.08 1.0)" d="M4.4 10.6 V0.6 L0.4 7.6 V7.9 H6"/><path transform="translate(1094.00 141.00) scale(1.08 1.0)" d="M3 0.55 Q0.55 0.55 0.55 5.5 Q0.55 10.45 3 10.45 Q5.45 10.45 5.45 5.5 Q5.45 0.55 3 0.55 Z"/><path transform="translate(1100.80 141.00) scale(1.08 1.0)" d="M3 0.55 Q0.55 0.55 0.55 5.5 Q0.55 10.45 3 10.45 Q5.45 10.45 5.45 5.5 Q5.45 0.55 3 0.55 Z"/><path transform="translate(1146.40 141.00) scale(1.08 1.0)" d="M0.9 2.3 Q2.6 1.5 3.6 0.5 V10.5"/><path transform="translate(1153.20 141.00) scale(1.08 1.0)" d="M5.2 0.55 H1.3 L1 5 Q1.8 4.5 2.9 4.5 Q5.5 4.5 5.5 7.4 Q5.5 10.45 2.7 10.45 Q1.4 10.45 0.6 9.9"/><path transform="translate(1160.00 141.00) scale(1.08 1.0)" d="M3 0.55 Q0.55 0.55 0.55 5.5 Q0.55 10.45 3 10.45 Q5.45 10.45 5.45 5.5 Q5.45 0.55 3 0.55 Z"/><path transform="translate(1166.80 141.00) scale(1.08 1.0)" d="M3 0.55 Q0.55 0.55 0.55 5.5 Q0.55 10.45 3 10.45 Q5.45 10.45 5.45 5.5 Q5.45 0.55 3 0.55 Z"/><path transform="translate(1213.40 141.00) scale(1.08 1.0)" d="M0.9 2.3 Q2.6 1.5 3.6 0.5 V10.5"/><path transform="translate(1220.20 141.00) scale(1.08 1.0)" d="M5 0.8 Q4.3 0.5 3.4 0.5 Q0.6 0.5 0.6 5.8 Q0.6 10.5 3.1 10.5 Q5.5 10.5 5.5 7.3 Q5.5 4.4 3.2 4.4 Q1.4 4.4 0.7 6.2"/><path transform="translate(1227.00 141.00) scale(1.08 1.0)" d="M3 0.55 Q0.55 0.55 0.55 5.5 Q0.55 10.45 3 10.45 Q5.45 10.45 5.45 5.5 Q5.45 0.55 3 0.55 Z"/><path transform="translate(1233.80 141.00) scale(1.08 1.0)" d="M3 0.55 Q0.55 0.55 0.55 5.5 Q0.55 10.45 3 10.45 Q5.45 10.45 5.45 5.5 Q5.45 0.55 3 0.55 Z"/><path transform="translate(1280.40 141.00) scale(1.08 1.0)" d="M0.9 2.3 Q2.6 1.5 3.6 0.5 V10.5"/><path transform="translate(1287.20 141.00) scale(1.08 1.0)" d="M0.4 0.55 H5.7 V0.8 L2.2 10.6"/><path transform="translate(1294.00 141.00) scale(1.08 1.0)" d="M3 0.55 Q0.55 0.55 0.55 5.5 Q0.55 10.45 3 10.45 Q5.45 10.45 5.45 5.5 Q5.45 0.55 3 0.55 Z"/><path transform="translate(1300.80 141.00) scale(1.08 1.0)" d="M3 0.55 Q0.55 0.55 0.55 5.5 Q0.55 10.45 3 10.45 Q5.45 10.45 5.45 5.5 Q5.45 0.55 3 0.55 Z"/><path transform="translate(1346.40 141.00) scale(1.08 1.0)" d="M0.9 2.3 Q2.6 1.5 3.6 0.5 V10.5"/><path transform="translate(1353.20 141.00) scale(1.08 1.0)" d="M3 5.3 Q0.9 5.1 0.9 2.9 Q0.9 0.5 3 0.5 Q5.1 0.5 5.1 2.9 Q5.1 5.1 3 5.3 Q0.5 5.5 0.5 8 Q0.5 10.5 3 10.5 Q5.5 10.5 5.5 8 Q5.5 5.5 3 5.3 Z"/><path transform="translate(1360.00 141.00) scale(1.08 1.0)" d="M3 0.55 Q0.55 0.55 0.55 5.5 Q0.55 10.45 3 10.45 Q5.45 10.45 5.45 5.5 Q5.45 0.55 3 0.55 Z"/><path transform="translate(1366.80 141.00) scale(1.08 1.0)" d="M3 0.55 Q0.55 0.55 0.55 5.5 Q0.55 10.45 3 10.45 Q5.45 10.45 5.45 5.5 Q5.45 0.55 3 0.55 Z"/><path transform="translate(1413.40 141.00) scale(1.08 1.0)" d="M0.9 2.3 Q2.6 1.5 3.6 0.5 V10.5"/><path transform="translate(1420.20 141.00) scale(1.08 1.0)" d="M1 10.2 Q1.7 10.5 2.6 10.5 Q5.4 10.5 5.4 5.2 Q5.4 0.5 2.9 0.5 Q0.5 0.5 0.5 3.7 Q0.5 6.6 2.8 6.6 Q4.6 6.6 5.3 4.8"/><path transform="translate(1427.00 141.00) scale(1.08 1.0)" d="M3 0.55 Q0.55 0.55 0.55 5.5 Q0.55 10.45 3 10.45 Q5.45 10.45 5.45 5.5 Q5.45 0.55 3 0.55 Z"/><path transform="translate(1433.80 141.00) scale(1.08 1.0)" d="M3 0.55 Q0.55 0.55 0.55 5.5 Q0.55 10.45 3 10.45 Q5.45 10.45 5.45 5.5 Q5.45 0.55 3 0.55 Z"/></g></svg>
<svg class="a" style="left:61px;top:157px" width="25" height="826"><g transform="translate(-61 -157)" fill="none" stroke="#a4a4a4" stroke-width="1.05"><path transform="translate(70.40 184.60) scale(1.15 0.95)" d="M3 0.55 Q0.55 0.55 0.55 5.5 Q0.55 10.45 3 10.45 Q5.45 10.45 5.45 5.5 Q5.45 0.55 3 0.55 Z"/><path transform="translate(70.40 251.60) scale(1.15 0.95)" d="M0.9 2.3 Q2.6 1.5 3.6 0.5 V10.5"/><path transform="translate(70.40 262.60) scale(1.15 0.95)" d="M3 0.55 Q0.55 0.55 0.55 5.5 Q0.55 10.45 3 10.45 Q5.45 10.45 5.45 5.5 Q5.45 0.55 3 0.55 Z"/><path transform="translate(70.40 273.60) scale(1.15 0.95)" d="M3 0.55 Q0.55 0.55 0.55 5.5 Q0.55 10.45 3 10.45 Q5.45 10.45 5.45 5.5 Q5.45 0.55 3 0.55 Z"/><path transform="translate(70.40 317.60) scale(1.15 0.95)" d="M0.7 1.4 Q1.6 0.5 3 0.5 Q5.3 0.5 5.3 2.8 Q5.3 4.6 3.2 6.6 L0.6 10 V10.45 H5.8"/><path transform="translate(70.40 328.60) scale(1.15 0.95)" d="M3 0.55 Q0.55 0.55 0.55 5.5 Q0.55 10.45 3 10.45 Q5.45 10.45 5.45 5.5 Q5.45 0.55 3 0.55 Z"/><path transform="translate(70.40 339.60) scale(1.15 0.95)" d="M3 0.55 Q0.55 0.55 0.55 5.5 Q0.55 10.45 3 10.45 Q5.45 10.45 5.45 5.5 Q5.45 0.55 3 0.55 Z"/><path transform="translate(70.40 384.60) scale(1.15 0.95)" d="M0.8 1 Q1.8 0.5 2.9 0.5 Q5.2 0.5 5.2 2.7 Q5.2 5.2 2.3 5.2 H2.6 Q5.5 5.2 5.5 7.7 Q5.5 10.5 2.7 10.5 Q1.4 10.5 0.5 9.9"/><path transform="translate(70.40 395.60) scale(1.15 0.95)" d="M3 0.55 Q0.55 0.55 0.55 5.5 Q0.55 10.45 3 10.45 Q5.45 10.45 5.45 5.5 Q5.45 0.55 3 0.55 Z"/><path transform="translate(70.40 406.60) scale(1.15 0.95)" d="M3 0.55 Q0.55 0.55 0.55 5.5 Q0.55 10.45 3 10.45 Q5.45 10.45 5.45 5.5 Q5.45 0.55 3 0.55 Z"/><path transform="translate(70.40 451.60) scale(1.15 0.95)" d="M4.4 10.6 V0.6 L0.4 7.6 V7.9 H6"/><path transform="translate(70.40 462.60) scale(1.15 0.95)" d="M3 0.55 Q0.55 0.55 0.55 5.5 Q0.55 10.45 3 10.45 Q5.45 10.45 5.45 5.5 Q5.45 0.55 3 0.55 Z"/><path transform="translate(70.40 473.60) scale(1.15 0.95)" d="M3 0.55 Q0.55 0.55 0.55 5.5 Q0.55 10.45 3 10.45 Q5.45 10.45 5.45 5.5 Q5.45 0.55 3 0.55 Z"/><path transform="translate(70.40 517.60) scale(1.15 0.95)" d="M5.2 0.55 H1.3 L1 5 Q1.8 4.5 2.9 4.5 Q5.5 4.5 5.5 7.4 Q5.5 10.45 2.7 10.45 Q1.4 10.45 0.6 9.9"/><path transform="translate(70.40 528.60) scale(1.15 0.95)" d="M3 0.55 Q0.55 0.55 0.55 5.5 Q0.55 10.45 3 10.45 Q5.45 10.45 5.45 5.5 Q5.45 0.55 3 0.55 Z"/><path transform="translate(70.40 539.60) scale(1.15 0.95)" d="M3 0.55 Q0.55 0.55 0.55 5.5 Q0.55 10.45 3 10.45 Q5.45 10.45 5.45 5.5 Q5.45 0.55 3 0.55 Z"/><path transform="translate(70.40 584.60) scale(1.15 0.95)" d="M5 0.8 Q4.3 0.5 3.4 0.5 Q0.6 0.5 0.6 5.8 Q0.6 10.5 3.1 10.5 Q5.5 10.5 5.5 7.3 Q5.5 4.4 3.2 4.4 Q1.4 4.4 0.7 6.2"/><path transform="translate(70.40 595.60) scale(1.15 0.95)" d="M3 0.55 Q0.55 0.55 0.55 5.5 Q0.55 10.45 3 10.45 Q5.45 10.45 5.45 5.5 Q5.45 0.55 3 0.55 Z"/><path transform="translate(70.40 606.60) scale(1.15 0.95)" d="M3 0.55 Q0.55 0.55 0.55 5.5 Q0.55 10.45 3 10.45 Q5.45 10.45 5.45 5.5 Q5.45 0.55 3 0.55 Z"/><path transform="translate(70.40 651.60) scale(1.15 0.95)" d="M0.4 0.55 H5.7 V0.8 L2.2 10.6"/><path transform="translate(70.40 662.60) scale(1.15 0.95)" d="M3 0.55 Q0.55 0.55 0.55 5.5 Q0.55 10.45 3 10.45 Q5.45 10.45 5.45 5.5 Q5.45 0.55 3 0.55 Z"/><path transform="translate(70.40 673.60) scale(1.15 0.95)" d="M3 0.55 Q0.55 0.55 0.55 5.5 Q0.55 10.45 3 10.45 Q5.45 10.45 5.45 5.5 Q5.45 0.55 3 0.55 Z"/><path transform="translate(70.40 717.60) scale(1.15 0.95)" d="M3 5.3 Q0.9 5.1 0.9 2.9 Q0.9 0.5 3 0.5 Q5.1 0.5 5.1 2.9 Q5.1 5.1 3 5.3 Q0.5 5.5 0.5 8 Q0.5 10.5 3 10.5 Q5.5 10.5 5.5 8 Q5.5 5.5 3 5.3 Z"/><path transform="translate(70.40 728.60) scale(1.15 0.95)" d="M3 0.55 Q0.55 0.55 0.55 5.5 Q0.55 10.45 3 10.45 Q5.45 10.45 5.45 5.5 Q5.45 0.55 3 0.55 Z"/><path transform="translate(70.40 739.60) scale(1.15 0.95)" d="M3 0.55 Q0.55 0.55 0.55 5.5 Q0.55 10.45 3 10.45 Q5.45 10.45 5.45 5.5 Q5.45 0.55 3 0.55 Z"/><path transform="translate(70.40 784.60) scale(1.15 0.95)" d="M1 10.2 Q1.7 10.5 2.6 10.5 Q5.4 10.5 5.4 5.2 Q5.4 0.5 2.9 0.5 Q0.5 0.5 0.5 3.7 Q0.5 6.6 2.8 6.6 Q4.6 6.6 5.3 4.8"/><path transform="translate(70.40 795.60) scale(1.15 0.95)" d="M3 0.55 Q0.55 0.55 0.55 5.5 Q0.55 10.45 3 10.45 Q5.45 10.45 5.45 5.5 Q5.45 0.55 3 0.55 Z"/><path transform="translate(70.40 806.60) scale(1.15 0.95)" d="M3 0.55 Q0.55 0.55 0.55 5.5 Q0.55 10.45 3 10.45 Q5.45 10.45 5.45 5.5 Q5.45 0.55 3 0.55 Z"/><path transform="translate(70.40 851.60) scale(1.15 0.95)" d="M0.9 2.3 Q2.6 1.5 3.6 0.5 V10.5"/><path transform="translate(70.40 862.60) scale(1.15 0.95)" d="M3 0.55 Q0.55 0.55 0.55 5.5 Q0.55 10.45 3 10.45 Q5.45 10.45 5.45 5.5 Q5.45 0.55 3 0.55 Z"/><path transform="translate(70.40 873.60) scale(1.15 0.95)" d="M3 0.55 Q0.55 0.55 0.55 5.5 Q0.55 10.45 3 10.45 Q5.45 10.45 5.45 5.5 Q5.45 0.55 3 0.55 Z"/><path transform="translate(70.40 884.60) scale(1.15 0.95)" d="M3 0.55 Q0.55 0.55 0.55 5.5 Q0.55 10.45 3 10.45 Q5.45 10.45 5.45 5.5 Q5.45 0.55 3 0.55 Z"/><path transform="translate(70.40 917.60) scale(1.15 0.95)" d="M0.9 2.3 Q2.6 1.5 3.6 0.5 V10.5"/><path transform="translate(70.40 928.60) scale(1.15 0.95)" d="M0.9 2.3 Q2.6 1.5 3.6 0.5 V10.5"/><path transform="translate(70.40 939.60) scale(1.15 0.95)" d="M3 0.55 Q0.55 0.55 0.55 5.5 Q0.55 10.45 3 10.45 Q5.45 10.45 5.45 5.5 Q5.45 0.55 3 0.55 Z"/><path transform="translate(70.40 950.60) scale(1.15 0.95)" d="M3 0.55 Q0.55 0.55 0.55 5.5 Q0.55 10.45 3 10.45 Q5.45 10.45 5.45 5.5 Q5.45 0.55 3 0.55 Z"/><path transform="translate(70.40 984.60) scale(1.15 0.95)" d="M0.9 2.3 Q2.6 1.5 3.6 0.5 V10.5"/><path transform="translate(70.40 995.60) scale(1.15 0.95)" d="M0.7 1.4 Q1.6 0.5 3 0.5 Q5.3 0.5 5.3 2.8 Q5.3 4.6 3.2 6.6 L0.6 10 V10.45 H5.8"/><path transform="translate(70.40 1006.60) scale(1.15 0.95)" d="M3 0.55 Q0.55 0.55 0.55 5.5 Q0.55 10.45 3 10.45 Q5.45 10.45 5.45 5.5 Q5.45 0.55 3 0.55 Z"/><path transform="translate(70.40 1017.60) scale(1.15 0.95)" d="M3 0.55 Q0.55 0.55 0.55 5.5 Q0.55 10.45 3 10.45 Q5.45 10.45 5.45 5.5 Q5.45 0.55 3 0.55 Z"/></g></svg>
<div class="a" style="left:86px;top:157px;width:1376px;height:826px;background:#282828"></div>
<div class="a" style="left:143px;top:182px;width:1263px;height:801px;background:#1e1e1e"></div>
<div class="a" style="left:144px;top:183px;width:1261px;height:800px;background:#ffffff"></div>
<div class="a" style="left:1462px;top:132px;width:25px;height:851px;background:#4a4a4a"></div>
<div class="a" style="left:1465px;top:384px;width:18px;height:287px;background:#6a6a6a;border-radius:2px"></div>
<svg class="a" style="left:1462px;top:132px" width="25" height="851"><path d="M9 17.5 L13.5 13 L18 17.5" stroke="#a8a8a8" stroke-width="1.1" fill="none"/><path d="M9 833 L13.5 837.5 L18 833" stroke="#a8a8a8" stroke-width="1.1" fill="none"/></svg>
<div class="a" style="left:61px;top:983px;width:1426px;height:5px;background:#4a4a4a"></div>
<div class="a" style="left:61px;top:983px;width:1426px;height:1px;background:#383838"></div>
<div class="a" style="left:61px;top:984px;width:72px;height:4px;background:#424242"></div>
<div class="a" style="left:133px;top:984px;width:275px;height:4px;background:#535353"></div>
<div class="a" style="left:750px;top:986px;width:370px;height:2px;background:#6a6a6a"></div>
<div class="a" style="left:1462px;top:984px;width:25px;height:4px;background:#535353"></div>
<svg class="a" style="left:0;top:0" width="1493" height="988"><defs><filter id="sh" x="-10%" y="-10%" width="130%" height="130%"><feGaussianBlur stdDeviation="0.8"/></filter><linearGradient id="ag" gradientUnits="userSpaceOnUse" x1="0" y1="0" x2="1" y2="1"><stop offset="0" stop-color="#f00000"/><stop offset="1" stop-color="#d80000"/></linearGradient></defs><polygon points="751,296 992,455.5 900,714 602,714 510,455.5" fill="#24fd97" stroke="#262626" stroke-width="1.05"/><path d="M483 168 L459 176.3 Q455.6 179.2 459.2 181.4 L466 180.3 L464.5 182.7 L281.6 416 Q282.6 417.6 284.2 416.2 L473.8 187.6 L474.1 193.2 Q476.5 197.2 479.4 193.3 Z" fill="#606060" opacity="0.45" transform="translate(1.3 1.3)" filter="url(#sh)"/><path d="M483 168 L459 176.3 Q455.6 179.2 459.2 181.4 L466 180.3 L464.5 182.7 L281.6 416 Q282.6 417.6 284.2 416.2 L473.8 187.6 L474.1 193.2 Q476.5 197.2 479.4 193.3 Z" fill="#e60000"/></svg>
<div class="t" style="left:243.05px;top:429.60px;font-size:21.5px;color:transparent;font-weight:bold;transform:scaleX(1.0827);transform-origin:0 0;text-shadow:2.40px 1.70px 0.9px rgba(0,0,0,0.13),2.24px 2.50px 0.9px rgba(0,0,0,0.13),1.78px 3.18px 0.9px rgba(0,0,0,0.13),1.10px 3.64px 0.9px rgba(0,0,0,0.13),0.30px 3.80px 0.9px rgba(0,0,0,0.13),-0.50px 3.64px 0.9px rgba(0,0,0,0.13),-1.18px 3.18px 0.9px rgba(0,0,0,0.13),-1.64px 2.50px 0.9px rgba(0,0,0,0.13),-1.80px 1.70px 0.9px rgba(0,0,0,0.13),-1.64px 0.90px 0.9px rgba(0,0,0,0.13),-1.18px 0.22px 0.9px rgba(0,0,0,0.13),-0.50px -0.24px 0.9px rgba(0,0,0,0.13),0.30px -0.40px 0.9px rgba(0,0,0,0.13),1.10px -0.24px 0.9px rgba(0,0,0,0.13),1.78px 0.22px 0.9px rgba(0,0,0,0.13),2.24px 0.90px 0.9px rgba(0,0,0,0.13);">Ctrl</div><div class="t" style="left:243.05px;top:429.60px;font-size:21.5px;color:#e30000;font-weight:bold;transform:scaleX(1.0827);transform-origin:0 0;text-shadow:2.10px 0.00px 0 #fff,1.94px 0.80px 0 #fff,1.48px 1.48px 0 #fff,0.80px 1.94px 0 #fff,0.00px 2.10px 0 #fff,-0.80px 1.94px 0 #fff,-1.48px 1.48px 0 #fff,-1.94px 0.80px 0 #fff,-2.10px 0.00px 0 #fff,-1.94px -0.80px 0 #fff,-1.48px -1.48px 0 #fff,-0.80px -1.94px 0 #fff,-0.00px -2.10px 0 #fff,0.80px -1.94px 0 #fff,1.48px -1.48px 0 #fff,1.94px -0.80px 0 #fff;">Ctrl</div><div class="t" style="left:289.16px;top:429.60px;font-size:21.5px;color:transparent;font-weight:bold;transform:scaleX(0.9265);transform-origin:0 0;text-shadow:2.40px 1.70px 0.9px rgba(0,0,0,0.13),2.24px 2.50px 0.9px rgba(0,0,0,0.13),1.78px 3.18px 0.9px rgba(0,0,0,0.13),1.10px 3.64px 0.9px rgba(0,0,0,0.13),0.30px 3.80px 0.9px rgba(0,0,0,0.13),-0.50px 3.64px 0.9px rgba(0,0,0,0.13),-1.18px 3.18px 0.9px rgba(0,0,0,0.13),-1.64px 2.50px 0.9px rgba(0,0,0,0.13),-1.80px 1.70px 0.9px rgba(0,0,0,0.13),-1.64px 0.90px 0.9px rgba(0,0,0,0.13),-1.18px 0.22px 0.9px rgba(0,0,0,0.13),-0.50px -0.24px 0.9px rgba(0,0,0,0.13),0.30px -0.40px 0.9px rgba(0,0,0,0.13),1.10px -0.24px 0.9px rgba(0,0,0,0.13),1.78px 0.22px 0.9px rgba(0,0,0,0.13),2.24px 0.90px 0.9px rgba(0,0,0,0.13);">+</div><div class="t" style="left:289.16px;top:429.60px;font-size:21.5px;color:#e30000;font-weight:bold;transform:scaleX(0.9265);transform-origin:0 0;text-shadow:2.10px 0.00px 0 #fff,1.94px 0.80px 0 #fff,1.48px 1.48px 0 #fff,0.80px 1.94px 0 #fff,0.00px 2.10px 0 #fff,-0.80px 1.94px 0 #fff,-1.48px 1.48px 0 #fff,-1.94px 0.80px 0 #fff,-2.10px 0.00px 0 #fff,-1.94px -0.80px 0 #fff,-1.48px -1.48px 0 #fff,-0.80px -1.94px 0 #fff,-0.00px -2.10px 0 #fff,0.80px -1.94px 0 #fff,1.48px -1.48px 0 #fff,1.94px -0.80px 0 #fff;">+</div><div class="t" style="left:307.45px;top:429.60px;font-size:21.5px;color:transparent;font-weight:bold;transform:scaleX(0.8776);transform-origin:0 0;text-shadow:2.40px 1.70px 0.9px rgba(0,0,0,0.13),2.24px 2.50px 0.9px rgba(0,0,0,0.13),1.78px 3.18px 0.9px rgba(0,0,0,0.13),1.10px 3.64px 0.9px rgba(0,0,0,0.13),0.30px 3.80px 0.9px rgba(0,0,0,0.13),-0.50px 3.64px 0.9px rgba(0,0,0,0.13),-1.18px 3.18px 0.9px rgba(0,0,0,0.13),-1.64px 2.50px 0.9px rgba(0,0,0,0.13),-1.80px 1.70px 0.9px rgba(0,0,0,0.13),-1.64px 0.90px 0.9px rgba(0,0,0,0.13),-1.18px 0.22px 0.9px rgba(0,0,0,0.13),-0.50px -0.24px 0.9px rgba(0,0,0,0.13),0.30px -0.40px 0.9px rgba(0,0,0,0.13),1.10px -0.24px 0.9px rgba(0,0,0,0.13),1.78px 0.22px 0.9px rgba(0,0,0,0.13),2.24px 0.90px 0.9px rgba(0,0,0,0.13);">R</div><div class="t" style="left:307.45px;top:429.60px;font-size:21.5px;color:#e30000;font-weight:bold;transform:scaleX(0.8776);transform-origin:0 0;text-shadow:2.10px 0.00px 0 #fff,1.94px 0.80px 0 #fff,1.48px 1.48px 0 #fff,0.80px 1.94px 0 #fff,0.00px 2.10px 0 #fff,-0.80px 1.94px 0 #fff,-1.48px 1.48px 0 #fff,-1.94px 0.80px 0 #fff,-2.10px 0.00px 0 #fff,-1.94px -0.80px 0 #fff,-1.48px -1.48px 0 #fff,-0.80px -1.94px 0 #fff,-0.00px -2.10px 0 #fff,0.80px -1.94px 0 #fff,1.48px -1.48px 0 #fff,1.94px -0.80px 0 #fff;">R</div>
<div class="a" style="left:993px;top:119px;width:235px;height:235px;border:8px solid #e30000;border-radius:5px"></div>
<div class="a" style="left:1015px;top:143px;width:188px;height:187.5px;background:#f0f0f0;border:1px solid #979797;box-shadow:3px 3px 3px rgba(0,0,0,0.45)"></div>
<svg class="a" style="left:1015px;top:143px" width="30" height="30"><path d="M7.3 15.5 L10.5 19.5 L17 11.5" stroke="#000" stroke-width="2.3" fill="none"/></svg>
<div class="t" style="left:1046.61px;top:151.32px;font-size:18.4px;color:#000;font-weight:normal;transform:scaleX(0.9186);transform-origin:0 0;-webkit-text-stroke:0.3px #000;">Pixels</div>
<div class="t" style="left:1047.13px;top:176.32px;font-size:18.4px;color:#000;font-weight:normal;transform:scaleX(0.9874);transform-origin:0 0;-webkit-text-stroke:0.3px #000;">Inches</div>
<div class="t" style="left:1047.13px;top:202.32px;font-size:18.4px;color:#000;font-weight:normal;transform:scaleX(0.9456);transform-origin:0 0;-webkit-text-stroke:0.3px #000;">Centimeters</div>
<div class="t" style="left:1046.55px;top:229.32px;font-size:18.4px;color:#000;font-weight:normal;transform:scaleX(0.9587);transform-origin:0 0;-webkit-text-stroke:0.3px #000;">Millimeters</div>
<div class="t" style="left:1046.55px;top:254.32px;font-size:18.4px;color:#000;font-weight:normal;transform:scaleX(0.9640);transform-origin:0 0;-webkit-text-stroke:0.3px #000;">Points</div>
<div class="t" style="left:1046.64px;top:280.32px;font-size:18.4px;color:#000;font-weight:normal;transform:scaleX(0.8992);transform-origin:0 0;-webkit-text-stroke:0.3px #000;">Picas</div>
<div class="t" style="left:1046.60px;top:307.32px;font-size:18.4px;color:#000;font-weight:normal;transform:scaleX(0.9277);transform-origin:0 0;-webkit-text-stroke:0.3px #000;">Percent</div></body></html>
